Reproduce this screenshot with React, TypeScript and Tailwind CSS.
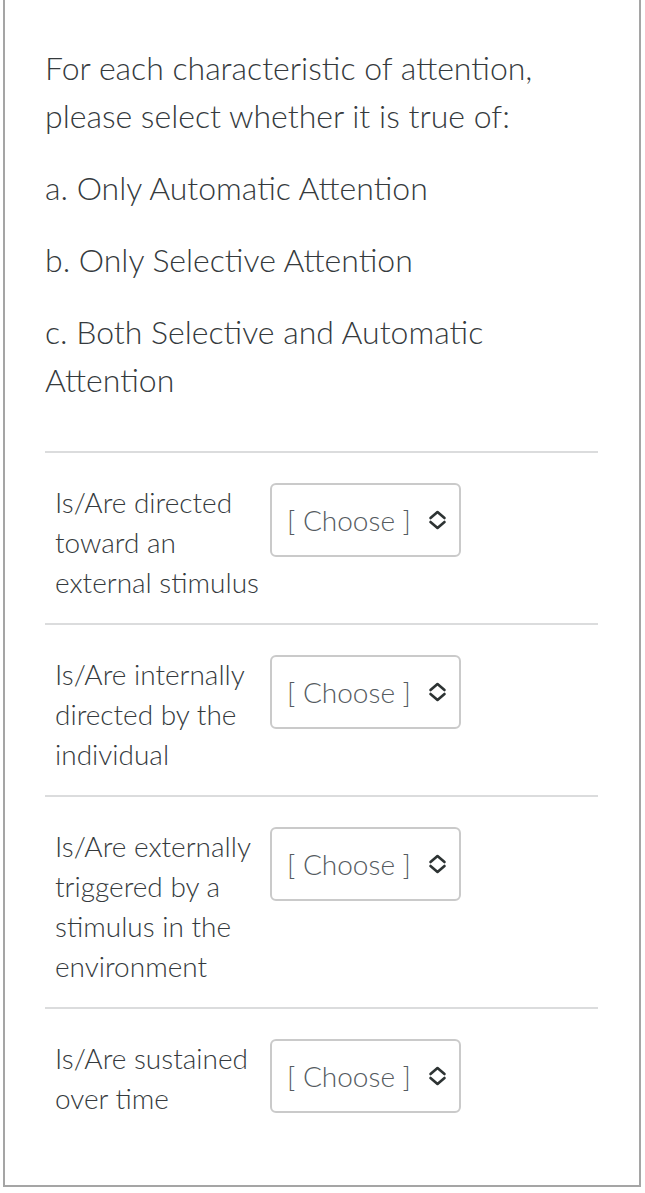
import React from 'react';

const rows = [
  'Is/Are directed toward an external stimulus',
  'Is/Are internally directed by the individual',
  'Is/Are externally triggered by a stimulus in the environment',
  'Is/Are sustained over time',
];

const Chevron: React.FC = () => (
  <svg width="19" height="20" viewBox="0 0 19 20" fill="none" stroke="#2d3333" strokeWidth="2.6" strokeLinecap="round" strokeLinejoin="round">
    <path d="M2.5 8 L9.5 2 L16.5 8" />
    <path d="M2.5 12 L9.5 18 L16.5 12" />
  </svg>
);

const ChooseSelect: React.FC = () => (
  <div className="mt-[1px] flex h-[74px] w-[191px] shrink-0 items-center justify-between rounded-[6px] border-2 border-[#cacaca] bg-white pl-[15px] pr-[12px]">
    <span className="text-[28px] font-light text-[#555b5f]">[ Choose ]</span>
    <Chevron />
  </div>
);

const App: React.FC = () => {
  return (
    <div className="min-h-screen bg-white" style={{ fontFamily: 'Lato, "Noto Sans", sans-serif' }}>
      <div className="ml-[3px] w-[638px] h-[1187px] border-x-2 border-b-2 border-[#a5a5a5] pl-[40px] pr-[41px] pt-[44px] text-[#353a3d]">
        {/* Question text */}
        <div className="text-[32px] font-light leading-[48px]">
          <p>For each characteristic of attention, please select whether it is true of:</p>
          <p className="mt-[24px]">a. Only Automatic Attention</p>
          <p className="mt-[24px]">b. Only Selective Attention</p>
          <p className="mt-[24px]">c. Both Selective and Automatic Attention</p>
        </div>

        {/* Matching rows */}
        <div className="mt-[47px]">
          {rows.map((label, i) => (
            <div key={i} className="flex gap-[10px] border-t-2 border-[#dbdcdd] pl-[10px] pt-[29px] pb-[21px]">
              <div className="w-[205px] shrink-0 text-[28px] font-light leading-[40px]">{label}</div>
              <ChooseSelect />
            </div>
          ))}
        </div>
      </div>
    </div>
  );
};

export default App;
